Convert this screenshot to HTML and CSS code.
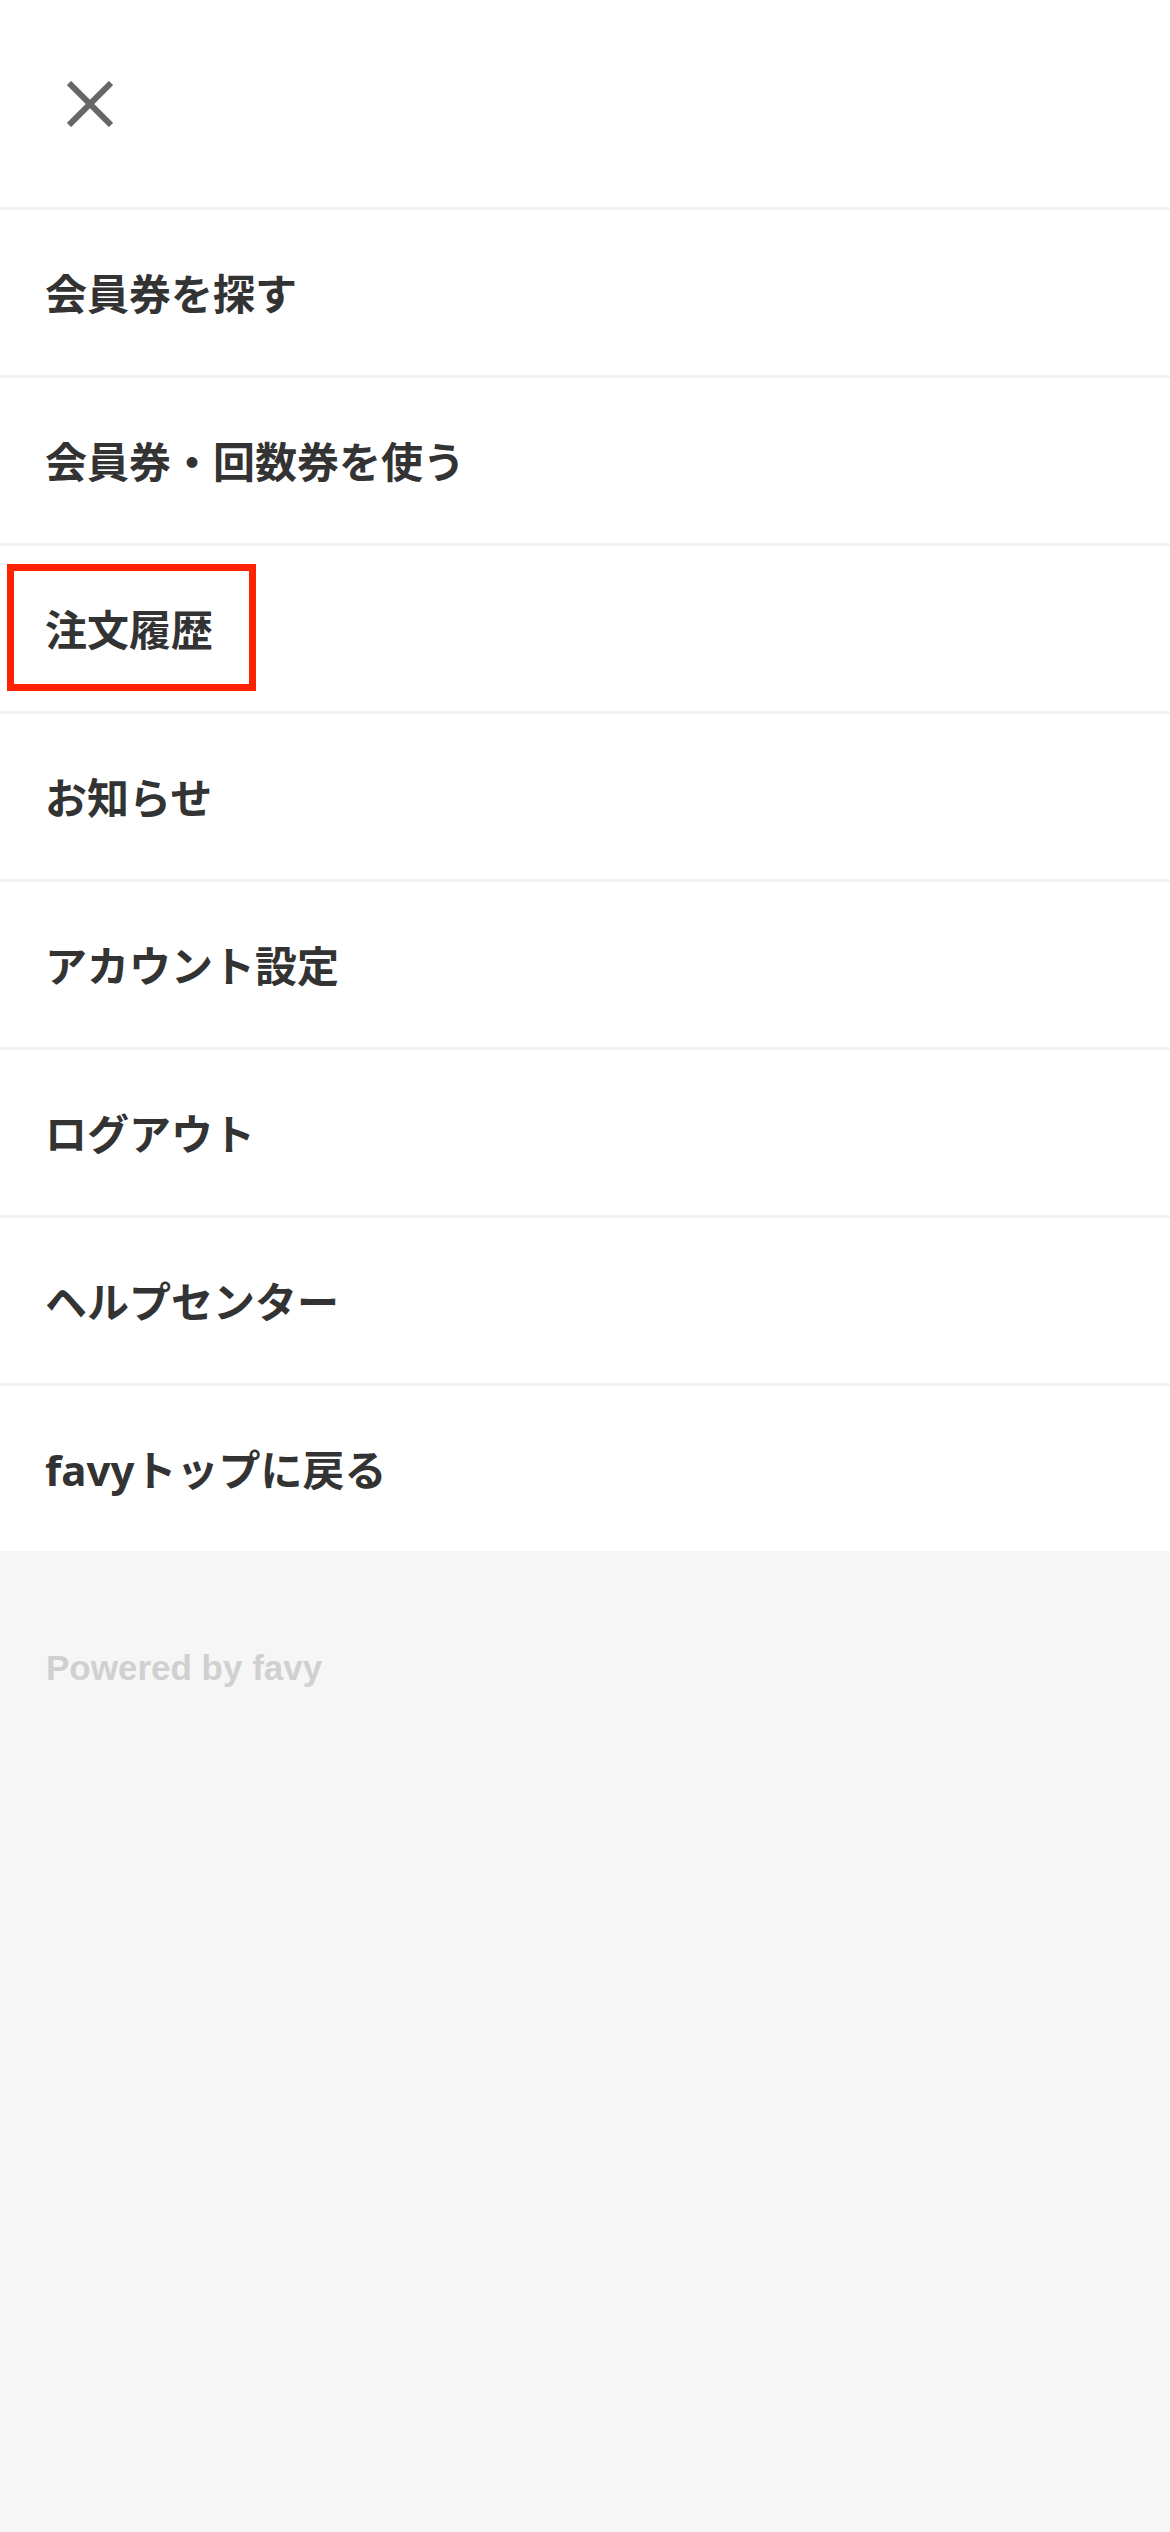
FILE: index.html
```html
<!DOCTYPE html>
<html lang="ja">
<head>
<meta charset="utf-8">
<title>Menu</title>
<link rel="stylesheet" href="styles.css">
</head>
<body>
<div class="menu">
  <header class="menu-header">
    <button class="close-btn" aria-label="閉じる">
      <svg width="46" height="46" viewBox="0 0 46 46"><path d="M2 2 L44 44 M44 2 L2 44" stroke="#666" stroke-width="6" fill="none"/></svg>
    </button>
  </header>
  <nav class="menu-list">
    <a class="menu-item">会員券を探す</a>
    <a class="menu-item">会員券・回数券を使う</a>
    <a class="menu-item highlighted">注文履歴<span class="mark"></span></a>
    <a class="menu-item">お知らせ</a>
    <a class="menu-item">アカウント設定</a>
    <a class="menu-item">ログアウト</a>
    <a class="menu-item">ヘルプセンター</a>
    <a class="menu-item">favyトップに戻る</a>
  </nav>
  <footer class="menu-footer">Powered by favy</footer>
</div>
</body>
</html>
```
FILE: styles.css
```css
html, body {
  margin: 0;
  padding: 0;
  background: #f6f6f6;
  min-height: 2532px;
}
.menu {
  display: flex;
  flex-direction: column;
}
.menu-header {
  height: 207px;
  background: #fff;
  display: flex;
  align-items: center;
  padding-left: 67px;
}
.close-btn {
  border: 0;
  background: none;
  padding: 0;
  width: 46px;
  height: 46px;
  display: block;
}
.close-btn svg { display: block; }
.menu-list {
  display: flex;
  flex-direction: column;
  background: #fff;
}
.menu-item {
  position: relative;
  height: 165px;
  border-top: 3px solid #f3f3f3;
  display: flex;
  align-items: center;
  padding-left: 45px;
  padding-bottom: 2px;
  box-sizing: content-box;
  font-family: "Noto Sans", "Noto Sans CJK JP", sans-serif;
  font-weight: 700;
  font-size: 42px;
  color: #333;
  text-decoration: none;
}
.menu-item { height: 163px; }
.mark {
  position: absolute;
  left: 7px;
  top: 18px;
  width: 235px;
  height: 113px;
  border: 7px solid #ff2200;
}
.menu-footer {
  padding: 97px 0 0 46px;
  font-family: "Liberation Sans", Arial, sans-serif;
  font-weight: 700;
  font-size: 35px;
  line-height: 40px;
  color: #d0d0d0;
}
```
